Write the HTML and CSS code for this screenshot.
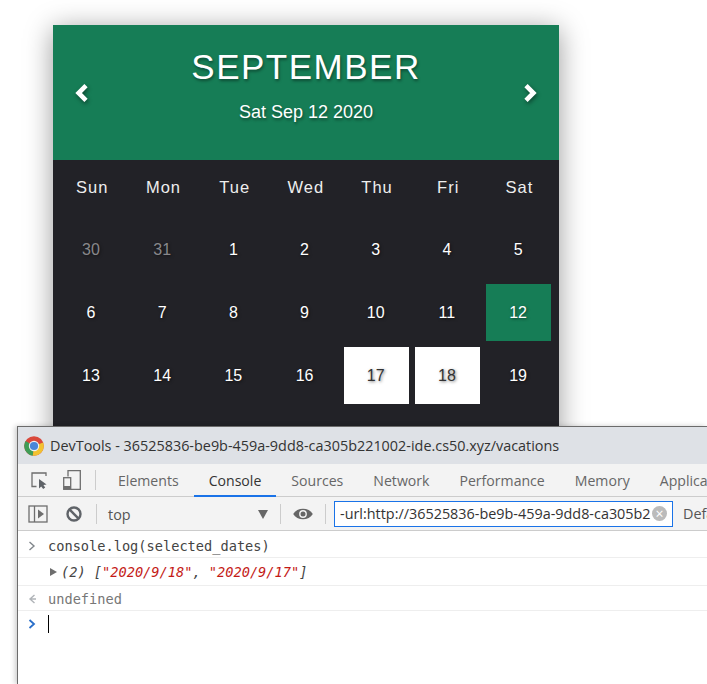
FILE: index.html
```html
<!DOCTYPE html>
<html lang="en">
<head>
    <meta charset="UTF-8">
    <title>Vacations</title>
    <link rel="stylesheet" href="styles.css">
</head>
<body>
    <div class="calendar">
        <div class="month">
            <svg class="arrow" viewBox="0 0 16 18" width="16" height="18"><path d="M12 1.6 L4.6 9 L12 16.4" /></svg>
            <div class="month-name">
                <h1>SEPTEMBER</h1>
                <p>Sat Sep 12 2020</p>
            </div>
            <svg class="arrow" viewBox="0 0 16 18" width="16" height="18"><path d="M4 1.6 L11.4 9 L4 16.4" /></svg>
        </div>
        <div class="weekdays">
            <div>Sun</div><div>Mon</div><div>Tue</div><div>Wed</div><div>Thu</div><div>Fri</div><div>Sat</div>
        </div>
        <div class="days">
            <div class="other">30</div><div class="other">31</div><div>1</div><div>2</div><div>3</div><div>4</div><div>5</div>
            <div>6</div><div>7</div><div>8</div><div>9</div><div>10</div><div>11</div><div class="today">12</div>
            <div>13</div><div>14</div><div>15</div><div>16</div><div class="selected">17</div><div class="selected">18</div><div>19</div>
        </div>
    </div>

    <!-- devtools window lies over the calendar -->
    <div class="devtools">
        <div class="titlebar">
            <svg class="chrome" viewBox="0 0 20 20" width="20" height="20">
                <circle cx="10" cy="10" r="9.8" fill="#d9483b"/>
                <path d="M10 10 L1.6 5 A9.8 9.8 0 0 0 8.8 19.7 Z" fill="#3f9d57"/>
                <path d="M10 10 L19.2 6.6 A9.8 9.8 0 0 1 8.8 19.7 Z" fill="#f2c230"/>
                <circle cx="10" cy="10" r="5.2" fill="#eef1f5"/>
                <circle cx="10" cy="10" r="4.1" fill="#4a86d8"/>
            </svg>
            <span>DevTools - 36525836-be9b-459a-9dd8-ca305b221002-ide.cs50.xyz/vacations</span>
        </div>
        <div class="tabs">
            <svg class="inspect" viewBox="0 0 18 17" width="18" height="17">
                <path d="M5.5 14.5 H1 V1 H15 V4" fill="none" stroke="#6e6e6e" stroke-width="1.3"/>
                <path d="M8 7 L8 16.5 L10.2 14.4 L12.2 17 L14.2 15.6 L12.4 13 L15.6 12.6 Z" fill="#5f6368"/>
            </svg>
            <svg class="device" viewBox="0 0 18 20" width="18" height="20">
                <path d="M5 6.5 V0.7 H17.3 V19.3 H8" fill="none" stroke="#6e6e6e" stroke-width="1.3"/>
                <rect x="0.7" y="7.7" width="7" height="11.6" fill="none" stroke="#6e6e6e" stroke-width="1.3"/>
                <rect x="0.7" y="16" width="7" height="3.3" fill="#6e6e6e"/>
            </svg>
            <i class="sep"></i>
            <div class="tab">Elements</div>
            <div class="tab active">Console</div>
            <div class="tab">Sources</div>
            <div class="tab">Network</div>
            <div class="tab">Performance</div>
            <div class="tab">Memory</div>
            <div class="tab">Application</div>
        </div>
        <div class="toolbar">
            <svg class="sidebar" viewBox="0 0 20 18" width="20" height="18">
                <rect x="1" y="1" width="18" height="16" fill="none" stroke="#6e6e6e" stroke-width="1.3"/>
                <path d="M6.5 1 V17" stroke="#6e6e6e" stroke-width="1.3"/>
                <path d="M10 4.5 L16 9 L10 13.5 Z" fill="#6e6e6e"/>
            </svg>
            <svg class="clear" viewBox="0 0 18 18" width="18" height="18">
                <circle cx="9" cy="9" r="6.5" fill="none" stroke="#5f6368" stroke-width="2.4"/>
                <path d="M4.4 4.4 L13.6 13.6" stroke="#5f6368" stroke-width="2.4"/>
            </svg>
            <i class="sep"></i>
            <div class="context">top<b></b></div>
            <i class="sep"></i>
            <svg class="eye" viewBox="0 0 20 14" width="20" height="14">
                <path d="M0.2 7 C4 0 16 0 19.8 7 C16 14 4 14 0.2 7 Z" fill="#666"/>
                <circle cx="10" cy="7" r="3.9" fill="#f3f3f3"/>
                <circle cx="10" cy="7" r="2.5" fill="#666"/>
            </svg>
            <i class="sep"></i>
            <div class="filter">
                <span>-url:http://36525836-be9b-459a-9dd8-ca305b2</span>
                <em>&times;</em>
            </div>
            <div class="levels">Default levels</div>
        </div>
        <div class="console">
            <div class="line first">
                <svg class="prompt" viewBox="0 0 8 10" width="8" height="10"><path d="M1.5 1 L6 5 L1.5 9" stroke="#80868b"/></svg>
                <span>console.log(selected_dates)</span>
            </div>
            <div class="line result">
                <i class="expand"></i>
                <span class="array">(2) [<s>"2020/9/18"</s>, <s>"2020/9/17"</s>]</span>
            </div>
            <div class="line undefined">
                <svg class="prompt" viewBox="0 0 8 10" width="8" height="10"><path d="M6.5 1 L2 5 L6.5 9 M2 5 H8" stroke="#b0b4b8"/></svg>
                <span>undefined</span>
            </div>
            <div class="line input">
                <svg class="prompt" viewBox="0 0 8 10" width="8" height="10"><path d="M1.5 1 L6 5 L1.5 9" stroke="#2a6fc9" stroke-width="1.8"/></svg>
                <i class="caret"></i>
            </div>
        </div>
    </div>
</body>
</html>
```

FILE: styles.css
```css
html, body {
    height: 684px;
    overflow: hidden;
}

body {
    margin: 0;
    background-color: #fff;
    font-family: "Liberation Sans", Arial, sans-serif;
    position: relative;
}

.calendar {
    width: 506px;
    height: 500px;
    margin: 25px 0 0 53px;
    background-color: #222227;
    box-shadow: 0 4px 26px rgba(0, 0, 0, 0.4);
    color: #fff;
}

.month {
    height: 135px;
    background-color: #167d56;
    display: flex;
    align-items: center;
    justify-content: space-between;
    padding: 0 21px;
    box-sizing: border-box;
}

.arrow {
    filter: drop-shadow(1px 2px 2px rgba(0, 0, 0, 0.45));
}

.arrow path {
    fill: none;
    stroke: #fff;
    stroke-width: 4.6;
}

.month-name {
    text-align: center;
    text-shadow: 1px 2px 3px rgba(0, 0, 0, 0.4);
    margin-bottom: 15px;
}

.month-name h1 {
    margin: 0 0 14px;
    font-size: 35px;
    font-weight: normal;
    letter-spacing: 1.5px;
    line-height: 40px;
}

.month-name p {
    margin: 0;
    font-size: 18px;
    line-height: 22px;
}

.weekdays {
    display: grid;
    grid-template-columns: repeat(7, 64.6px);
    column-gap: 6.6px;
    padding: 18px 0 0 7px;
    height: 18px;
    font-size: 16.5px;
    letter-spacing: 1px;
    line-height: 18px;
    text-align: center;
    color: #eee;
}

.days {
    display: grid;
    grid-template-columns: repeat(7, 64.6px);
    grid-auto-rows: 57px;
    gap: 6px 6.6px;
    padding: 25px 0 0 6.2px;
    font-size: 16px;
    text-shadow: 1px 1px 3px rgba(0, 0, 0, 0.5);
}

.days div {
    display: flex;
    align-items: center;
    justify-content: center;
    padding-right: 1px;
}

.days .other {
    color: #88888b;
}

.days .today {
    background-color: #167d56;
}

.days .selected {
    background-color: #fff;
    color: #333;
}

.devtools {
    position: absolute;
    left: 17px;
    top: 426px;
    right: 0;
    bottom: 0;
    background-color: #fff;
    border-left: 1px solid #6b6b6b;
    border-top: 1px solid #6b6b6b;
    box-shadow: -2px 0 5px rgba(0, 0, 0, 0.2);
    font-family: "Open Sans", Arial, sans-serif;
    font-size: 14.4px;
    color: #555;
    overflow: hidden;
}

.titlebar {
    height: 37px;
    background-color: #dee1e6;
    display: flex;
    align-items: center;
    padding-left: 6px;
    color: #333;
    white-space: nowrap;
}

.chrome {
    margin-right: 6px;
    flex: none;
}

.tabs {
    height: 33px;
    background-color: #f3f3f3;
    border-bottom: 1px solid #ccc;
    box-sizing: border-box;
    display: flex;
    align-items: center;
    padding-left: 13px;
    font-size: 14.1px;
    white-space: nowrap;
}

.inspect {
    flex: none;
    margin-right: 14px;
}

.device {
    flex: none;
    margin-right: 14px;
}

.sep {
    flex: none;
    width: 1px;
    height: 20px;
    background-color: #ccc;
}

.tabs .sep {
    margin-right: 7px;
}

.tab {
    flex: none;
    height: 33px;
    line-height: 33px;
    padding: 0 15px;
    box-sizing: border-box;
    color: #666;
}

.tab.active {
    color: #333;
    border-bottom: 2px solid #1a73e8;
}

.toolbar {
    height: 34px;
    background-color: #f3f3f3;
    border-bottom: 1px solid #ccc;
    box-sizing: border-box;
    display: flex;
    align-items: center;
    padding-left: 10px;
    white-space: nowrap;
}

.sidebar {
    flex: none;
    margin-right: 17px;
}

.clear {
    flex: none;
    margin-right: 13px;
}

.context {
    flex: none;
    width: 183px;
    padding: 1px 0 0 11px;
    box-sizing: border-box;
    position: relative;
}

.context b {
    position: absolute;
    right: 12px;
    top: 6px;
    border-left: 5px solid transparent;
    border-right: 5px solid transparent;
    border-top: 9px solid #666;
}

.eye {
    flex: none;
    margin: 0 12px;
}

.filter {
    flex: none;
    width: 339px;
    height: 26px;
    margin: 0 10px 0 8px;
    box-sizing: border-box;
    border: 1px solid #1a73e8;
    background-color: #fff;
    display: flex;
    align-items: center;
    padding-left: 5px;
    overflow: hidden;
    position: relative;
    color: #333;
}

.filter em {
    position: absolute;
    right: 5px;
    top: 4px;
    width: 15px;
    height: 15px;
    border-radius: 50%;
    background-color: #bbb;
    color: #fff;
    font-style: normal;
    font-size: 14px;
    line-height: 15px;
    text-align: center;
}

.levels {
    flex: none;
    color: #555;
}

.console {
    font-family: "DejaVu Sans Mono", monospace;
    font-size: 13.65px;
    color: #444;
}

.line {
    display: flex;
    align-items: center;
    height: 26px;
    padding-left: 10px;
    border-bottom: 1px solid #eee;
    white-space: nowrap;
}

.first {
    padding-top: 3px;
    height: 23px;
}

.prompt {
    flex: none;
    margin-right: 12px;
    fill: none;
    stroke-width: 1.4;
}

.result {
    height: 27px;
    padding-left: 32px;
}

.expand {
    flex: none;
    margin-right: 4px;
    border-top: 4px solid transparent;
    border-bottom: 4px solid transparent;
    border-left: 7px solid #6e6e6e;
}

.array {
    font-style: italic;
}

.array s {
    text-decoration: none;
    color: #c41a16;
}

.undefined {
    color: #777;
    height: 23px;
    padding-top: 1px;
}

.input {
    border-bottom: none;
}

.caret {
    width: 1px;
    height: 18px;
    background-color: #000;
}
```
